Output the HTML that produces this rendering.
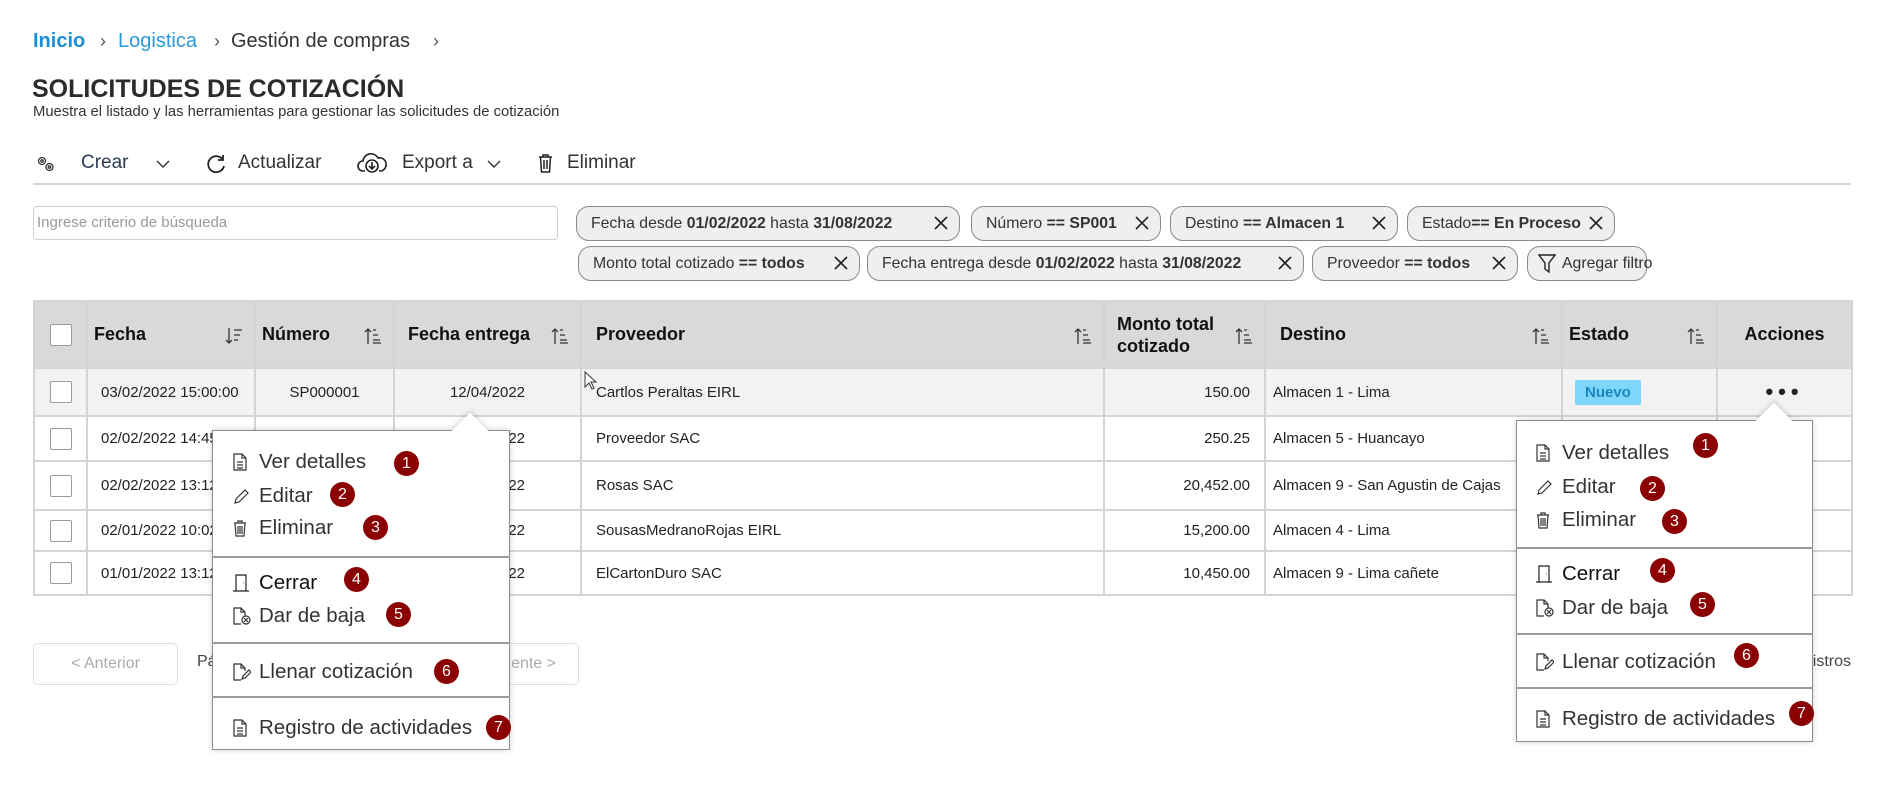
<!DOCTYPE html>
<html><head><meta charset="utf-8">
<style>
*{box-sizing:border-box;margin:0;padding:0}
body{width:1881px;height:786px;background:#fff;font-family:"Liberation Sans",Arial,sans-serif;color:#333;position:relative;overflow:hidden}
.a{position:absolute;white-space:nowrap}
.bc{font-size:20px;top:30px}
.tb{font-size:19px;top:152px;color:#333}
.chip{position:absolute;height:35px;border:1px solid #8a8a8a;border-radius:13px;background:#efefef;font-size:15.8px;color:#333;padding:0 0 0 14px;line-height:33px;white-space:nowrap}
.chip .x{position:absolute;right:10px;top:8px;width:16px;height:16px}
table{position:absolute;left:33px;top:300px;border-collapse:collapse;table-layout:fixed;width:1818px}
td,th{border:2px solid #d4d4d4;font-size:15px;color:#222;white-space:nowrap;position:relative}
th{background:#d9d9d9;font-size:18px;font-weight:bold;color:#111;text-align:left;padding-left:6px;height:67px}
.cb{display:inline-block;width:22px;height:22px;border:1px solid #9a9a9a;background:#fff;border-radius:2px;vertical-align:middle}
.srt{position:absolute;right:10px;top:24px}
.menu{position:absolute;background:#fff;border:1px solid #8c8c8c;box-shadow:0 0 6px rgba(0,0,0,.18)}
.mi{position:absolute;font-size:20.5px;color:#333;white-space:nowrap}
.mi svg{position:absolute;left:-26px;top:3px}
.sep{position:absolute;left:0;right:0;height:2px;background:#9a9a9a}
.bd{position:absolute;width:25px;height:25px;border-radius:50%;background:#8b0000;color:#fff;font-size:16px;text-align:center;line-height:25px}
.arr{position:absolute;width:26px;height:26px;background:#fff;transform:rotate(45deg);box-shadow:-2px -2px 4px rgba(0,0,0,.12)}
</style></head><body>

<div class="a bc" style="left:33px;color:#1a8fd6;font-weight:bold">Inicio</div>
<div class="a bc" style="left:100px;color:#555;font-size:18px;top:31px">›</div>
<div class="a bc" style="left:118px;color:#2a9ad8">Logistica</div>
<div class="a bc" style="left:214px;color:#555;font-size:18px;top:31px">›</div>
<div class="a bc" style="left:231px;color:#333">Gestión de compras</div>
<div class="a bc" style="left:433px;color:#555;font-size:18px;top:31px">›</div>

<div class="a" style="left:32px;top:75px;font-size:25px;font-weight:bold;color:#2b2b2b">SOLICITUDES DE COTIZACIÓN</div>
<div class="a" style="left:33px;top:104px;font-size:14.8px;color:#333">Muestra el listado y las herramientas para gestionar las solicitudes de cotización</div>

<!-- toolbar -->
<svg class="a" style="left:36px;top:155px" width="20" height="18" viewBox="0 0 20 18" fill="none" stroke="#333" stroke-width="1.3"><circle cx="6" cy="6" r="3.5"/><circle cx="6" cy="6" r="1.2"/><circle cx="13.5" cy="12" r="3.5"/><circle cx="13.5" cy="12" r="1.2"/></svg>
<div class="a tb" style="left:81px;color:#2c3a55">Crear</div>
<svg class="a" style="left:156px;top:160px" width="14" height="9" viewBox="0 0 14 9" fill="none" stroke="#333" stroke-width="1.4"><path d="M1 1l6 6 6-6"/></svg>
<svg class="a" style="left:205px;top:153px" width="22" height="22" viewBox="0 0 22 22" fill="none" stroke="#222" stroke-width="1.8"><path d="M18 7A8 8 0 1 0 19 13"/><path d="M18 2v5h-5"/></svg>
<div class="a tb" style="left:238px">Actualizar</div>
<svg class="a" style="left:357px;top:151px" width="30" height="24" viewBox="0 0 30 24" fill="none" stroke="#222" stroke-width="1.6"><path d="M8 20H6a5 5 0 0 1 0-10 8 8 0 0 1 15-3 6 6 0 0 1 3 13h-2"/><circle cx="15" cy="15" r="6"/><path d="M15 11v7M12 15l3 3 3-3"/></svg>
<div class="a tb" style="left:402px">Export a</div>
<svg class="a" style="left:487px;top:160px" width="14" height="9" viewBox="0 0 14 9" fill="none" stroke="#333" stroke-width="1.4"><path d="M1 1l6 6 6-6"/></svg>
<svg class="a" style="left:538px;top:153px" width="15" height="20" viewBox="0 0 15 20" fill="none" stroke="#222" stroke-width="1.5"><path d="M1 4h13M5 4V2h5v2M2.5 4l1 15h8l1-15M6 7v9M9 7v9"/></svg>
<div class="a tb" style="left:567px">Eliminar</div>
<div class="a" style="left:33px;top:183px;width:1818px;height:2px;background:#d6d6d6"></div>

<!-- search -->
<div class="a" style="left:33px;top:206px;width:525px;height:34px;border:1px solid #d0d0d0;border-radius:4px;font-size:15px;color:#999;line-height:32px;padding-left:3px">Ingrese criterio de búsqueda</div>

<!-- chips -->
<div class="chip" style="left:576px;top:206px;width:384px">Fecha desde <b>01/02/2022</b> hasta <b>31/08/2022</b><svg class="x" viewBox="0 0 16 16" stroke="#222" stroke-width="1.6"><path d="M2 2l12 12M14 2L2 14"/></svg></div>
<div class="chip" style="left:971px;top:206px;width:190px">Número <b>== SP001</b><svg class="x" viewBox="0 0 16 16" stroke="#222" stroke-width="1.6"><path d="M2 2l12 12M14 2L2 14"/></svg></div>
<div class="chip" style="left:1170px;top:206px;width:228px">Destino <b>== Almacen 1</b><svg class="x" viewBox="0 0 16 16" stroke="#222" stroke-width="1.6"><path d="M2 2l12 12M14 2L2 14"/></svg></div>
<div class="chip" style="left:1407px;top:206px;width:208px">Estado<b>== En Proceso</b><svg class="x" viewBox="0 0 16 16" stroke="#222" stroke-width="1.6"><path d="M2 2l12 12M14 2L2 14"/></svg></div>
<div class="chip" style="left:578px;top:246px;width:282px">Monto total cotizado <b>== todos</b><svg class="x" viewBox="0 0 16 16" stroke="#222" stroke-width="1.6"><path d="M2 2l12 12M14 2L2 14"/></svg></div>
<div class="chip" style="left:867px;top:246px;width:437px">Fecha entrega desde <b>01/02/2022</b> hasta <b>31/08/2022</b><svg class="x" viewBox="0 0 16 16" stroke="#222" stroke-width="1.6"><path d="M2 2l12 12M14 2L2 14"/></svg></div>
<div class="chip" style="left:1312px;top:246px;width:206px">Proveedor <b>== todos</b><svg class="x" viewBox="0 0 16 16" stroke="#222" stroke-width="1.6"><path d="M2 2l12 12M14 2L2 14"/></svg></div>
<div class="chip" style="left:1527px;top:246px;width:120px;padding-left:34px">Agregar filtro<svg style="position:absolute;left:10px;top:7px" width="18" height="20" viewBox="0 0 18 20" fill="none" stroke="#222" stroke-width="1.4"><path d="M1 1h16l-6 8v9l-4-3V9z"/></svg></div>

<!-- table -->
<table>
<colgroup><col style="width:53px"><col style="width:168px"><col style="width:139px"><col style="width:187px"><col style="width:523px"><col style="width:161px"><col style="width:297px"><col style="width:155px"><col style="width:135px"></colgroup>
<tr>
<th style="text-align:center;padding:0"><span class="cb"></span></th>
<th>Fecha<svg class="srt" width="20" height="20" viewBox="0 0 20 20" fill="none" stroke="#333" stroke-width="1.3"><path d="M5 2v15M2 14l3 3 3-3M10 4h8M10 9h6M10 14h4"/></svg></th>
<th>Número<svg class="srt" width="20" height="20" viewBox="0 0 20 20" fill="none" stroke="#333" stroke-width="1.3"><path d="M5 18V3M2 6l3-3 3 3M10 4h3M10 9h5M10 14h7M10 17h8"/></svg></th>
<th style="padding-left:13px">Fecha entrega<svg class="srt" width="20" height="20" viewBox="0 0 20 20" fill="none" stroke="#333" stroke-width="1.3"><path d="M5 18V3M2 6l3-3 3 3M10 4h3M10 9h5M10 14h7M10 17h8"/></svg></th>
<th style="padding-left:14px">Proveedor<svg class="srt" width="20" height="20" viewBox="0 0 20 20" fill="none" stroke="#333" stroke-width="1.3"><path d="M5 18V3M2 6l3-3 3 3M10 4h3M10 9h5M10 14h7M10 17h8"/></svg></th>
<th style="padding-left:12px;line-height:22px">Monto total<br>cotizado<svg class="srt" width="20" height="20" viewBox="0 0 20 20" fill="none" stroke="#333" stroke-width="1.3"><path d="M5 18V3M2 6l3-3 3 3M10 4h3M10 9h5M10 14h7M10 17h8"/></svg></th>
<th style="padding-left:14px">Destino<svg class="srt" width="20" height="20" viewBox="0 0 20 20" fill="none" stroke="#333" stroke-width="1.3"><path d="M5 18V3M2 6l3-3 3 3M10 4h3M10 9h5M10 14h7M10 17h8"/></svg></th>
<th>Estado<svg class="srt" width="20" height="20" viewBox="0 0 20 20" fill="none" stroke="#333" stroke-width="1.3"><path d="M5 18V3M2 6l3-3 3 3M10 4h3M10 9h5M10 14h7M10 17h8"/></svg></th>
<th style="text-align:center;padding:0">Acciones</th>
</tr>
<tr style="height:48px;background:#f2f2f2">
<td style="text-align:center"><span class="cb"></span></td><td style="padding-left:13px">03/02/2022 15:00:00</td><td style="text-align:center">SP000001</td><td style="text-align:center">12/04/2022</td><td style="padding-left:14px">Cartlos Peraltas EIRL</td><td style="text-align:right;padding-right:14px">150.00</td><td style="padding-left:7px">Almacen 1 - Lima</td><td style="padding-left:12px"><span style="display:inline-block;background:#7fd6fb;color:#1b86bd;font-weight:bold;font-size:15px;padding:0 10px;height:25px;line-height:25px;border-radius:2px">Nuevo</span></td><td style="text-align:center;font-size:22px;font-weight:bold;letter-spacing:5px;line-height:10px">•••</td>
</tr>
<tr style="height:45px"><td style="text-align:center"><span class="cb"></span></td><td style="padding-left:13px">02/02/2022 14:45</td><td></td><td style="text-align:center">12/04/2022</td><td style="padding-left:14px">Proveedor SAC</td><td style="text-align:right;padding-right:14px">250.25</td><td style="padding-left:7px">Almacen 5 - Huancayo</td><td></td><td></td></tr>
<tr style="height:49px"><td style="text-align:center"><span class="cb"></span></td><td style="padding-left:13px">02/02/2022 13:12</td><td></td><td style="text-align:center">12/04/2022</td><td style="padding-left:14px">Rosas SAC</td><td style="text-align:right;padding-right:14px">20,452.00</td><td style="padding-left:7px">Almacen 9 - San Agustin de Cajas</td><td></td><td></td></tr>
<tr style="height:41px"><td style="text-align:center"><span class="cb"></span></td><td style="padding-left:13px">02/01/2022 10:02</td><td></td><td style="text-align:center">12/04/2022</td><td style="padding-left:14px">SousasMedranoRojas EIRL</td><td style="text-align:right;padding-right:14px">15,200.00</td><td style="padding-left:7px">Almacen 4 - Lima</td><td></td><td></td></tr>
<tr style="height:44px"><td style="text-align:center"><span class="cb"></span></td><td style="padding-left:13px">01/01/2022 13:12</td><td></td><td style="text-align:center">12/04/2022</td><td style="padding-left:14px">ElCartonDuro SAC</td><td style="text-align:right;padding-right:14px">10,450.00</td><td style="padding-left:7px">Almacen 9 - Lima cañete</td><td></td><td></td></tr>
</table>

<!-- pagination -->
<div class="a" style="left:33px;top:643px;width:145px;height:42px;border:1px solid #ddd;border-radius:5px;font-size:16px;color:#aaa;text-align:center;line-height:40px">&lt; Anterior</div>
<div class="a" style="left:197px;top:653px;font-size:16px;color:#444">Página</div>
<div class="a" style="left:430px;top:643px;width:149px;height:42px;border:1px solid #ddd;border-radius:5px;font-size:16px;color:#aaa;text-align:right;padding-right:22px;line-height:40px">Siguiente &gt;</div>
<div class="a" style="left:1700px;top:653px;width:151px;text-align:right;font-size:16px;color:#444">de 5 registros</div>

<!-- menu 1 -->
<div class="menu" style="left:212px;top:430px;width:298px;height:320px">
 <div class="arr" style="left:244px;top:-13px"></div>
 <div style="position:absolute;left:0;top:0;right:0;height:20px;background:#fff"></div>
</div>
<div class="a" style="left:212px;top:430px;width:298px;height:320px">
 <div class="mi" style="left:47px;top:20px"><svg width="14" height="18" viewBox="0 0 14 18" fill="none" stroke="#333" stroke-width="1.2"><path d="M1 1h8l4 4v12H1z M9 1v4h4 M4 9h6M4 12h6M4 15h6"/></svg>Ver detalles</div>
 <div class="mi" style="left:47px;top:54px"><svg width="16" height="18" viewBox="0 0 16 18" fill="none" stroke="#333" stroke-width="1.2"><path d="M2 16l1-4 9-9 3 3-9 9z"/></svg>Editar</div>
 <div class="mi" style="left:47px;top:86px"><svg width="14" height="18" viewBox="0 0 14 18" fill="none" stroke="#333" stroke-width="1.2"><path d="M1 4h12M5 4V2h4v2M2 4l1 13h8l1-13M5 7v8M7 7v8M9 7v8"/></svg>Eliminar</div>
 <div class="sep" style="top:126px"></div>
 <div class="mi" style="left:47px;top:141px;color:#111"><svg width="16" height="18" viewBox="0 0 16 18" fill="none" stroke="#222" stroke-width="1.2"><path d="M0 17h16M3 17V1h10v16M10 9h.5"/></svg>Cerrar</div>
 <div class="mi" style="left:47px;top:174px"><svg width="18" height="18" viewBox="0 0 18 18" fill="none" stroke="#333" stroke-width="1.2"><path d="M8 17H1V1h7l4 4v4M8 1v4h4"/><circle cx="13" cy="13" r="4"/><path d="M11 11l4 4M15 11l-4 4"/></svg>Dar de baja</div>
 <div class="sep" style="top:212px"></div>
 <div class="mi" style="left:47px;top:230px"><svg width="18" height="18" viewBox="0 0 18 18" fill="none" stroke="#333" stroke-width="1.2"><path d="M8 17H1V1h7l4 4v3M8 1v4h4M9 16l1-3 6-6 2 2-6 6z"/></svg>Llenar cotización</div>
 <div class="sep" style="top:266px"></div>
 <div class="mi" style="left:47px;top:286px"><svg width="14" height="18" viewBox="0 0 14 18" fill="none" stroke="#333" stroke-width="1.2"><path d="M1 1h8l4 4v12H1z M9 1v4h4 M4 9h6M4 12h6M4 15h6"/></svg>Registro de actividades</div>
</div>
<div class="bd" style="left:394px;top:451px">1</div>
<div class="bd" style="left:330px;top:482px">2</div>
<div class="bd" style="left:363px;top:515px">3</div>
<div class="bd" style="left:344px;top:567px">4</div>
<div class="bd" style="left:386px;top:602px">5</div>
<div class="bd" style="left:434px;top:659px">6</div>
<div class="bd" style="left:486px;top:715px">7</div>

<!-- menu 2 -->
<div class="menu" style="left:1516px;top:420px;width:297px;height:322px">
 <div class="arr" style="left:244px;top:-13px"></div>
 <div style="position:absolute;left:0;top:0;right:0;height:20px;background:#fff"></div>
</div>
<div class="a" style="left:1516px;top:420px;width:297px;height:322px">
 <div class="mi" style="left:46px;top:21px"><svg width="14" height="18" viewBox="0 0 14 18" fill="none" stroke="#333" stroke-width="1.2"><path d="M1 1h8l4 4v12H1z M9 1v4h4 M4 9h6M4 12h6M4 15h6"/></svg>Ver detalles</div>
 <div class="mi" style="left:46px;top:55px"><svg width="16" height="18" viewBox="0 0 16 18" fill="none" stroke="#333" stroke-width="1.2"><path d="M2 16l1-4 9-9 3 3-9 9z"/></svg>Editar</div>
 <div class="mi" style="left:46px;top:88px"><svg width="14" height="18" viewBox="0 0 14 18" fill="none" stroke="#333" stroke-width="1.2"><path d="M1 4h12M5 4V2h4v2M2 4l1 13h8l1-13M5 7v8M7 7v8M9 7v8"/></svg>Eliminar</div>
 <div class="sep" style="top:127px"></div>
 <div class="mi" style="left:46px;top:142px;color:#111"><svg width="16" height="18" viewBox="0 0 16 18" fill="none" stroke="#222" stroke-width="1.2"><path d="M0 17h16M3 17V1h10v16M10 9h.5"/></svg>Cerrar</div>
 <div class="mi" style="left:46px;top:176px"><svg width="18" height="18" viewBox="0 0 18 18" fill="none" stroke="#333" stroke-width="1.2"><path d="M8 17H1V1h7l4 4v4M8 1v4h4"/><circle cx="13" cy="13" r="4"/><path d="M11 11l4 4M15 11l-4 4"/></svg>Dar de baja</div>
 <div class="sep" style="top:213px"></div>
 <div class="mi" style="left:46px;top:230px"><svg width="18" height="18" viewBox="0 0 18 18" fill="none" stroke="#333" stroke-width="1.2"><path d="M8 17H1V1h7l4 4v3M8 1v4h4M9 16l1-3 6-6 2 2-6 6z"/></svg>Llenar cotización</div>
 <div class="sep" style="top:267px"></div>
 <div class="mi" style="left:46px;top:287px"><svg width="14" height="18" viewBox="0 0 14 18" fill="none" stroke="#333" stroke-width="1.2"><path d="M1 1h8l4 4v12H1z M9 1v4h4 M4 9h6M4 12h6M4 15h6"/></svg>Registro de actividades</div>
</div>
<div class="bd" style="left:1693px;top:433px">1</div>
<div class="bd" style="left:1640px;top:476px">2</div>
<div class="bd" style="left:1662px;top:509px">3</div>
<div class="bd" style="left:1650px;top:558px">4</div>
<div class="bd" style="left:1690px;top:592px">5</div>
<div class="bd" style="left:1734px;top:643px">6</div>
<div class="bd" style="left:1789px;top:701px">7</div>

<!-- cursor -->
<svg class="a" style="left:584px;top:371px" width="14" height="20" viewBox="0 0 14 20"><path d="M1 1v15l4-4 3 6 2-1-3-6h5z" fill="#fff" stroke="#333" stroke-width="1"/></svg>
</body></html>
